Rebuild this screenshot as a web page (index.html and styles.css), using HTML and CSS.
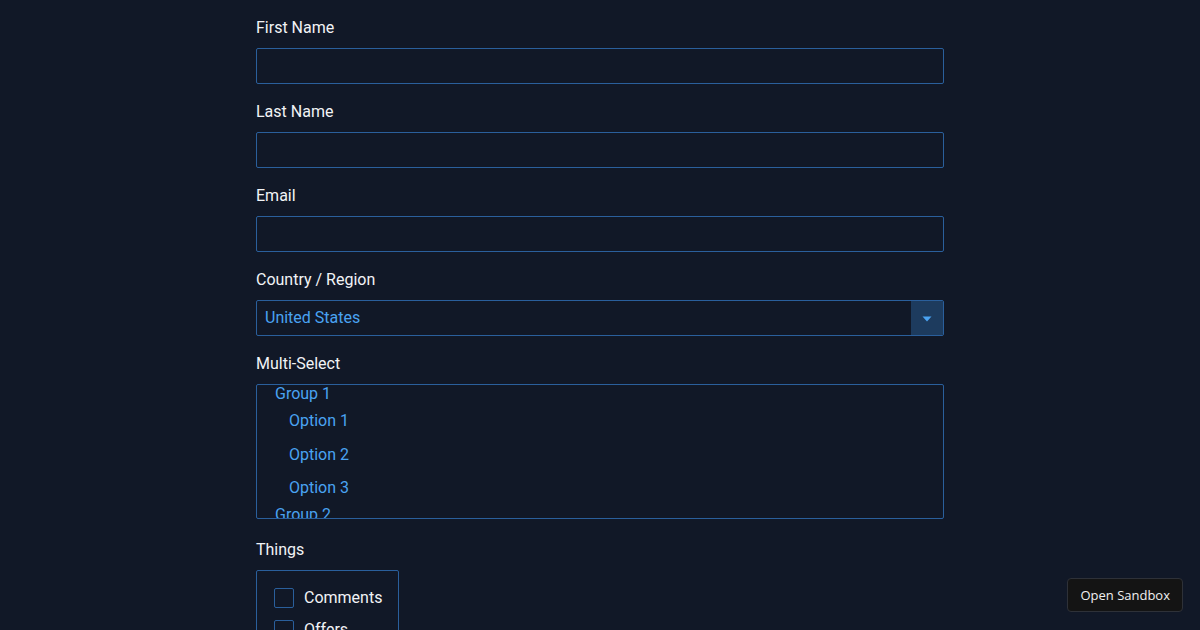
FILE: index.html
```html
<!DOCTYPE html>
<html lang="en">

<head>
    <meta charset="UTF-8">
    <meta name="viewport" content="width=device-width, initial-scale=1.0">
    <title>Form</title>
    <link rel="stylesheet" href="styles.css">
</head>

<body>
    <form class="form">
        <div class="form-group">
            <label>First Name</label>
            <div class="input"></div>
        </div>

        <div class="form-group">
            <label>Last Name</label>
            <div class="input"></div>
        </div>

        <div class="form-group">
            <label>Email</label>
            <div class="input"></div>
        </div>

        <div class="form-group">
            <label>Country / Region</label>
            <div class="select">
                <span class="select-value">United States</span>
                <span class="select-arrow">
                    <svg width="10" height="6" viewBox="0 0 10 6"><path d="M0.5 0.5h9L5 5.5z" fill="currentColor"/></svg>
                </span>
            </div>
        </div>

        <div class="form-group form-group-multi">
            <label>Multi-Select</label>
            <div class="multi">
                <div class="multi-list">
                    <div class="optgroup">Group 1</div>
                    <div class="option">Option 1</div>
                    <div class="option">Option 2</div>
                    <div class="option">Option 3</div>
                    <div class="optgroup">Group 2</div>
                    <div class="option">Option 4</div>
                </div>
            </div>
        </div>

        <div class="form-group">
            <label>Things</label>
            <div class="fieldset">
                <div class="check"><span class="box"></span>Comments</div>
                <div class="check"><span class="box"></span>Offers</div>
            </div>
        </div>
    </form>

    <button class="sandbox-btn" type="button">Open Sandbox</button>
</body>

</html>
```

FILE: styles.css
```css
:root {
    --bg: #111827;
    --text: #f1f3f6;
    --border: #2a5f9c;
    --accent: #4aa3f2;
    --arrow-bg: #1d3b5e;
}

* {
    margin: 0;
    padding: 0;
    box-sizing: border-box;
}

html,
body {
    height: 100%;
    overflow: hidden;
}

body {
    background-color: var(--bg);
    color: var(--text);
    font-family: Roboto, 'Liberation Sans', sans-serif;
    font-size: 16px;
}

.form {
    width: 688px;
    margin: 0 auto;
    padding-top: 16px;
}

.form-group {
    margin-bottom: 16px;
}

.form-group-multi {
    margin-bottom: 19px;
}

label {
    display: block;
    line-height: 24px;
    margin-bottom: 8px;
}

.input {
    height: 36px;
    border: 1px solid var(--border);
    border-radius: 2px;
}

.select {
    height: 36px;
    border: 1px solid var(--border);
    border-radius: 2px;
    display: flex;
    align-items: stretch;
    overflow: hidden;
}

.select-value {
    flex: 1;
    color: var(--accent);
    padding-left: 8px;
    line-height: 34px;
}

.select-arrow {
    width: 32px;
    background-color: var(--arrow-bg);
    color: var(--accent);
    display: flex;
    align-items: center;
    justify-content: center;
    padding-top: 2px;
}

.multi {
    height: 135px;
    border: 1px solid var(--border);
    border-radius: 2px;
    overflow: hidden;
    color: var(--accent);
}

.multi-list {
    margin-top: -1px;
}

.optgroup {
    padding-left: 18px;
    line-height: 20px;
}

.option {
    padding-left: 32px;
    line-height: 33.5px;
}

.fieldset {
    display: inline-block;
    border: 1px solid var(--border);
    border-radius: 2px;
    padding: 17px 15px 0 17px;
    width: 143px;
    height: 80px;
}

.check {
    display: flex;
    align-items: center;
    height: 20px;
    margin-bottom: 12px;
    line-height: 20px;
}

.box {
    width: 20px;
    height: 20px;
    border: 1px solid var(--border);
    border-radius: 2px;
    margin-right: 10px;
}

.sandbox-btn {
    position: fixed;
    right: 17px;
    bottom: 18px;
    background-color: #141414;
    color: #f0f0f0;
    border: 1px solid #2e3138;
    border-radius: 4px;
    padding: 0 12px;
    height: 34px;
    font-family: 'Open Sans', 'Noto Sans', sans-serif;
    font-size: 13px;
    font-weight: 500;
}
```
